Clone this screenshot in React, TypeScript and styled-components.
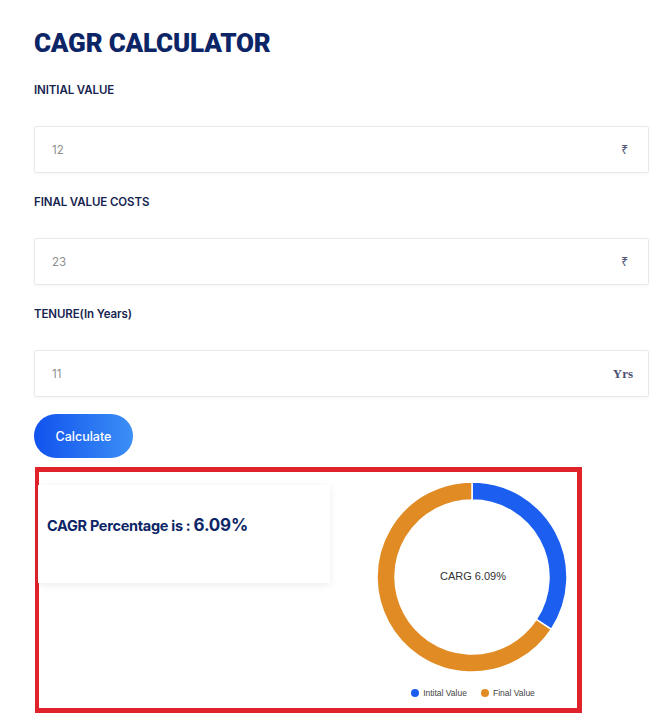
import React from "react"
import styled, { createGlobalStyle } from "styled-components"

const GlobalStyles = createGlobalStyle`
  body {
    margin: 0;
    background: #ffffff;
    font-family: "Inter", "Liberation Sans", sans-serif;
  }
`

const colors = {
  navy: "#0c2566",
  label: "#16244f",
  border: "#e9e9ec",
  blue: "#1b5ef0",
  orange: "#e08b24",
  red: "#e0222b",
}

const Page = styled.div`
  padding: 27px 7px 0 34px;
  display: flex;
  flex-direction: column;
`

const Title = styled.h1`
  margin: 0;
  font-family: "Roboto", "Liberation Sans", sans-serif;
  font-weight: 900;
  font-size: 26px;
  line-height: 32px;
  color: ${colors.navy};
  letter-spacing: -0.2px;
`

const Field = styled.div`
  display: flex;
  flex-direction: column;
`

const Label = styled.label<{ $top: number }>`
  margin-top: ${(p) => p.$top}px;
  font-size: 11.5px;
  font-weight: 600;
  line-height: 16px;
  color: ${colors.label};
  letter-spacing: -0.1px;
`

const InputBox = styled.div`
  margin-top: 28px;
  height: 47px;
  box-sizing: border-box;
  border: 1px solid ${colors.border};
  border-radius: 2px;
  box-shadow: 0 1px 3px rgba(0, 0, 0, 0.04);
  display: flex;
  align-items: center;
  padding: 0 20px 0 17px;
`

const Input = styled.input`
  flex: 1;
  border: none;
  outline: none;
  background: transparent;
  font-family: "Inter", "Liberation Sans", sans-serif;
  font-size: 11.5px;
  color: #8e8e8e;
  padding: 0;
`

const Unit = styled.span<{ $serif?: boolean }>`
  font-family: ${(p) =>
    p.$serif ? `"Liberation Serif", serif` : `"Noto Sans", "DejaVu Sans", sans-serif`};
  font-weight: ${(p) => (p.$serif ? 700 : 400)};
  font-size: ${(p) => (p.$serif ? "13px" : "12px")};
  color: #4b5170;
  margin-right: ${(p) => (p.$serif ? "-5px" : "0")};
`

const Button = styled.button`
  margin-top: 17px;
  align-self: flex-start;
  width: 99px;
  height: 44px;
  border: none;
  border-radius: 22px;
  background: linear-gradient(90deg, #1152ee 0%, #3b8ff5 100%);
  color: #ffffff;
  font-family: "Inter", "Liberation Sans", sans-serif;
  font-size: 12.5px;
  font-weight: 500;
  cursor: pointer;
`

const ResultBox = styled.section`
  margin-top: 9px;
  margin-left: 1px;
  width: 547px;
  height: 246px;
  box-sizing: border-box;
  border: 5px solid ${colors.red};
  border-width: 5px 5px 5px 4px;
  display: flex;
`

const ResultCard = styled.div`
  margin-top: 13px;
  margin-left: -1px;
  width: 292px;
  height: 98px;
  background: #ffffff;
  box-shadow: 0 2px 8px rgba(0, 0, 0, 0.08);
  box-sizing: border-box;
  padding: 30px 0 0 9px;
  font-family: "Inter", "Liberation Sans", sans-serif;
  font-weight: 700;
  font-size: 14.5px;
  color: ${colors.navy};
  letter-spacing: -0.3px;
`

const Percent = styled.span`
  font-size: 17px;
  letter-spacing: -0.2px;
`

const ChartColumn = styled.div`
  margin-left: 46px;
  padding-top: 11px;
  display: flex;
  flex-direction: column;
  align-items: center;
  width: 194px;
`

const ChartWrap = styled.div`
  position: relative;
  width: 194px;
  height: 190px;
`

const CenterText = styled.div`
  position: absolute;
  inset: 0;
  display: flex;
  align-items: center;
  justify-content: center;
  font-family: "Liberation Sans", Arial, sans-serif;
  font-size: 11px;
  color: #333333;
  padding-bottom: 4px;
`

const Legend = styled.div`
  margin-top: 15px;
  display: flex;
  gap: 14px;
  font-family: "Liberation Sans", Arial, sans-serif;
  font-size: 8.5px;
  color: #444444;
`

const LegendItem = styled.span<{ $color: string }>`
  display: flex;
  align-items: center;
  gap: 4px;
  &::before {
    content: "";
    width: 8px;
    height: 8px;
    border-radius: 50%;
    background: ${(p) => p.$color};
  }
`

function arcPath(cx: number, cy: number, r0: number, r1: number, a0: number, a1: number) {
  const pt = (r: number, a: number) => {
    const rad = ((a - 90) * Math.PI) / 180
    return `${cx + r * Math.cos(rad)} ${cy + r * Math.sin(rad)}`
  }
  const large = a1 - a0 > 180 ? 1 : 0
  return [
    `M ${pt(r1, a0)}`,
    `A ${r1} ${r1} 0 ${large} 1 ${pt(r1, a1)}`,
    `L ${pt(r0, a1)}`,
    `A ${r0} ${r0} 0 ${large} 0 ${pt(r0, a0)}`,
    "Z",
  ].join(" ")
}

function Donut({ initial, final }: { initial: number; final: number }) {
  const total = initial + final
  const split = (initial / total) * 360
  const cx = 96
  const cy = 94
  return (
    <svg width="194" height="190" viewBox="0 0 194 190">
      <path d={arcPath(cx, cy, 77, 95, 0, split)} fill={colors.blue} stroke="#fff" strokeWidth="1.5" />
      <path d={arcPath(cx, cy, 77, 95, split, 360)} fill={colors.orange} stroke="#fff" strokeWidth="1.5" />
    </svg>
  )
}

const fields = [
  { label: "INITIAL VALUE", value: "12", unit: "₹", top: 23 },
  { label: "FINAL VALUE COSTS", value: "23", unit: "₹", top: 21 },
  { label: "TENURE(In Years)", value: "11", unit: "Yrs", top: 21 },
]

function App() {
  return (
    <>
      <GlobalStyles />
      <Page>
        <Title>CAGR CALCULATOR</Title>
        {fields.map((f) => (
          <Field key={f.label}>
            <Label $top={f.top}>{f.label}</Label>
            <InputBox>
              <Input readOnly value={f.value} />
              <Unit $serif={f.unit === "Yrs"}>{f.unit}</Unit>
            </InputBox>
          </Field>
        ))}
        <Button>Calculate</Button>
        <ResultBox>
          <ResultCard>
            CAGR Percentage is : <Percent>6.09%</Percent>
          </ResultCard>
          <ChartColumn>
            <ChartWrap>
              <Donut initial={12} final={23} />
              <CenterText>CARG 6.09%</CenterText>
            </ChartWrap>
            <Legend>
              <LegendItem $color={colors.blue}>Intital Value</LegendItem>
              <LegendItem $color={colors.orange}>Final Value</LegendItem>
            </Legend>
          </ChartColumn>
        </ResultBox>
      </Page>
    </>
  )
}

export default App
